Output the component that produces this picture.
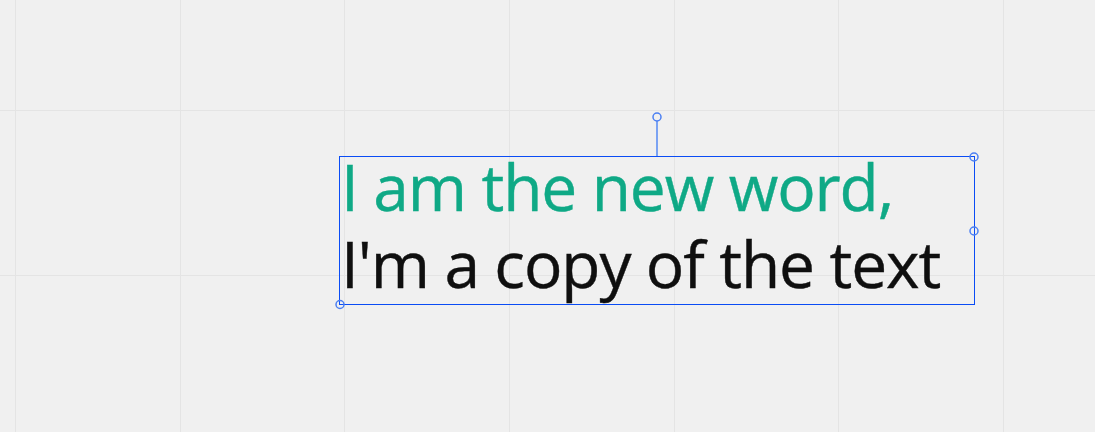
import React from "react";

export default function App() {
  const vx = [15, 180, 344, 509, 674, 838, 1003];
  const hy = [110, 275];
  return (
    <div className="relative w-[1095px] h-[432px] overflow-hidden bg-[#f0f0f0]">
      {vx.map((x) => (
        <div key={"v" + x} className="absolute top-0 bottom-0 w-px bg-[#e4e4e4]" style={{ left: x }} />
      ))}
      {hy.map((y) => (
        <div key={"h" + y} className="absolute left-0 right-0 h-px bg-[#e4e4e4]" style={{ top: y }} />
      ))}
      <div
        className="absolute left-[341px] top-[148px] whitespace-nowrap text-[64px] leading-[77px] tracking-[-1.1px]"
        style={{ fontFamily: '"Open Sans", sans-serif', WebkitTextStroke: "0.4px currentColor" }}
      >
        <div className="text-[#0fa986]">I am the new word,</div>
        <div className="text-[#0f0f0f]">I'm a copy of the text</div>
      </div>
      <div className="absolute left-[339px] top-[156px] w-[636px] h-[149px] border border-[#0a4cf5]" />
      <div className="absolute left-[656px] top-[121px] w-[2px] h-[35px] bg-[#7ba3f3]" />
      <svg className="absolute left-0 top-0" width="1095" height="432">
        <g fill="none" stroke="#4b7ff2" strokeWidth="1.5">
          <circle cx="657" cy="117" r="4" />
          <circle cx="974" cy="157" r="4" />
          <circle cx="974" cy="231" r="4" />
          <circle cx="340" cy="304.5" r="4" />
        </g>
      </svg>
    </div>
  );
}
